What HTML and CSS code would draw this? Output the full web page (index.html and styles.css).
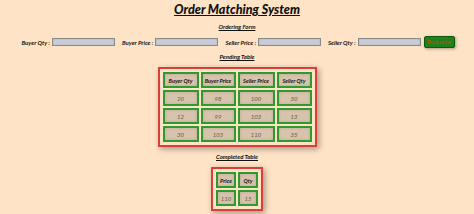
FILE: index.html
```html
<!DOCTYPE html>
<html>
<head>
<meta charset="utf-8">
<link rel="stylesheet" href="styles.css">
</head>
<body>
<div class="page">
  <h1 class="title">Order Matching System</h1>
  <h2 class="subtitle">Ordering Form</h2>
  <form class="form">
    <label class="lbl">Buyer Qty :</label><input class="inp" type="text">
    <label class="lbl">Buyer Price :</label><input class="inp" type="text">
    <label class="lbl">Seller Price :</label><input class="inp" type="text">
    <label class="lbl">Seller Qty :</label><input class="inp" type="text">
    <button class="btn" type="button">Place order</button>
  </form>
  <h2 class="subtitle sub-pending">Pending Table</h2>
  <div class="box">
    <table class="tbl tbl-pending">
      <tr><th>Buyer Qty</th><th>Buyer Price</th><th>Seller Price</th><th>Seller Qty</th></tr>
      <tr><td>20</td><td>98</td><td>100</td><td>30</td></tr>
      <tr><td>12</td><td>99</td><td>103</td><td>13</td></tr>
      <tr><td>30</td><td>105</td><td>110</td><td>35</td></tr>
    </table>
  </div>
  <h2 class="subtitle sub-completed">Completed Table</h2>
  <div class="box box-small">
    <table class="tbl tbl-completed">
      <tr><th>Price</th><th>Qty</th></tr>
      <tr><td>110</td><td>15</td></tr>
    </table>
  </div>
</div>
</body>
</html>
```

FILE: styles.css
```css
html, body {
  margin: 0;
  padding: 0;
  background: #fee3c6;
  height: 100%;
  overflow: hidden;
}
.page {
  display: flex;
  flex-direction: column;
  align-items: center;
  font-family: Lato, "Open Sans", sans-serif;
  color: #111;
}
.title {
  margin: 1px 0 0 0;
  font-size: 12.6px;
  font-style: italic;
  font-weight: 900;
  text-decoration: underline;
  line-height: 17px;
}
.subtitle {
  margin: 5px 0 0 0;
  font-size: 6px;
  font-style: italic;
  font-weight: 700;
  text-decoration: underline;
  line-height: 8px;
}
.form {
  display: flex;
  align-items: center;
  margin: 5px 0 0 0;
  padding-left: 2px;
}
.lbl {
  font-size: 6px;
  font-style: italic;
  font-weight: 700;
  margin-right: 2px;
  margin-left: 7px;
}
.lbl:first-child { margin-left: 0; }
.inp {
  width: 61px;
  height: 6px;
  padding: 0;
  border: 1px solid #8a8a8a;
  background: #c9cbd6;
  box-shadow: inset 0 0 1px #777;
}
.btn {
  margin-left: 3px;
  width: 31px;
  height: 12px;
  padding: 0;
  border: 1px solid #0c5a0c;
  border-radius: 2px;
  background: #1d821d;
  color: #d04010;
  font-family: Lato, sans-serif;
  font-size: 5px;
  box-shadow: 1px 1px 3px rgba(0,0,0,0.35);
}
.sub-pending { margin-top: 5px; }
.box {
  margin-top: 6px;
  border: 2px solid #d9403a;
  padding: 1px;
  box-shadow: 2px 2px 6px rgba(0,0,0,0.35);
}
.tbl {
  border-collapse: separate;
  border-spacing: 2px;
  table-layout: fixed;
}
.tbl th, .tbl td {
  box-sizing: border-box;
  border: 2px solid #2f9a2f;
  background: #d8c3ad;
  box-shadow: inset 0 0 3px rgba(0,0,0,0.15);
  height: 16px;
  padding: 0;
  text-align: center;
  font-style: italic;
  white-space: nowrap;
}
.tbl th {
  font-size: 5.6px;
  font-weight: 700;
  font-style: italic;
  color: #111;
}
.tbl td {
  font-size: 6px;
  color: #6a5a50;
}
.tbl-pending th:nth-child(1) { width: 36px; }
.tbl-pending th:nth-child(2) { width: 35px; }
.tbl-pending th:nth-child(3) { width: 37px; }
.tbl-pending th:nth-child(4) { width: 35px; }
.tbl-completed th { width: 20px; }
.sub-completed { margin-top: 6px; }
.box-small { margin-top: 6px; }
```
